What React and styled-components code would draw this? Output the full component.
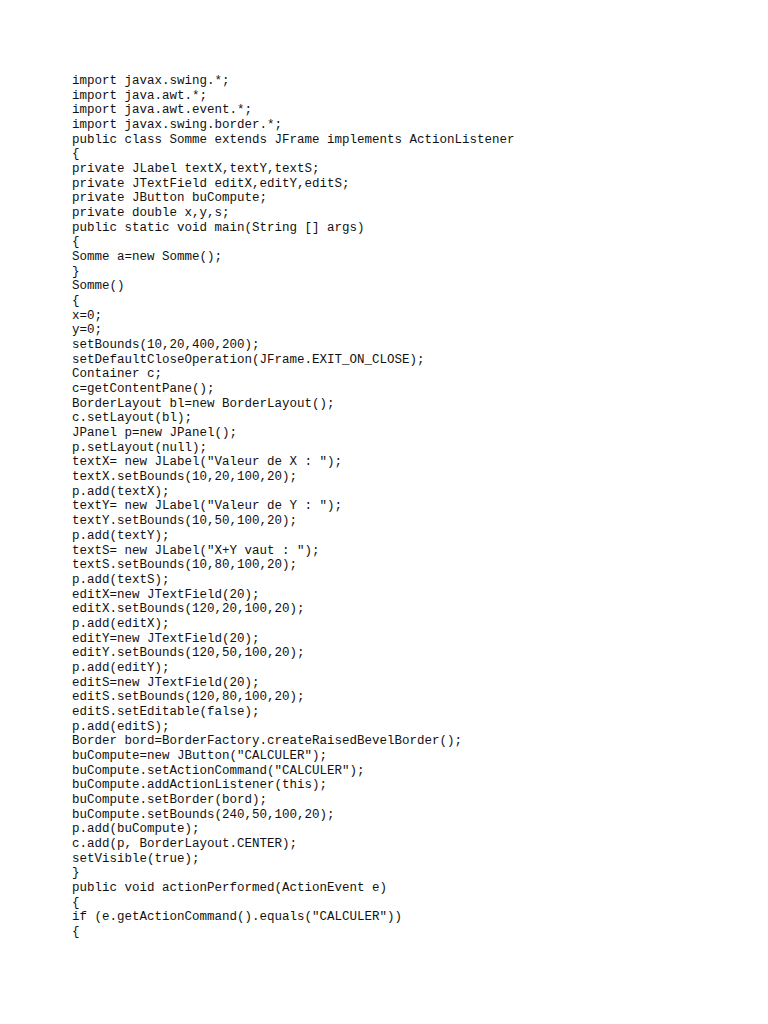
import React from "react";
import styled, { createGlobalStyle } from "styled-components";

const GlobalStyle = createGlobalStyle`
  html, body {
    margin: 0;
    padding: 0;
    background: #ffffff;
  }
`;

const lines = [
  "import javax.swing.*;",
  "import java.awt.*;",
  "import java.awt.event.*;",
  "import javax.swing.border.*;",
  "public class Somme extends JFrame implements ActionListener",
  "{",
  "private JLabel textX,textY,textS;",
  "private JTextField editX,editY,editS;",
  "private JButton buCompute;",
  "private double x,y,s;",
  "public static void main(String [] args)",
  "{",
  "Somme a=new Somme();",
  "}",
  "Somme()",
  "{",
  "x=0;",
  "y=0;",
  "setBounds(10,20,400,200);",
  "setDefaultCloseOperation(JFrame.EXIT_ON_CLOSE);",
  "Container c;",
  "c=getContentPane();",
  "BorderLayout bl=new BorderLayout();",
  "c.setLayout(bl);",
  "JPanel p=new JPanel();",
  "p.setLayout(null);",
  'textX= new JLabel("Valeur de X : ");',
  "textX.setBounds(10,20,100,20);",
  "p.add(textX);",
  'textY= new JLabel("Valeur de Y : ");',
  "textY.setBounds(10,50,100,20);",
  "p.add(textY);",
  'textS= new JLabel("X+Y vaut : ");',
  "textS.setBounds(10,80,100,20);",
  "p.add(textS);",
  "editX=new JTextField(20);",
  "editX.setBounds(120,20,100,20);",
  "p.add(editX);",
  "editY=new JTextField(20);",
  "editY.setBounds(120,50,100,20);",
  "p.add(editY);",
  "editS=new JTextField(20);",
  "editS.setBounds(120,80,100,20);",
  "editS.setEditable(false);",
  "p.add(editS);",
  "Border bord=BorderFactory.createRaisedBevelBorder();",
  'buCompute=new JButton("CALCULER");',
  'buCompute.setActionCommand("CALCULER");',
  "buCompute.addActionListener(this);",
  "buCompute.setBorder(bord);",
  "buCompute.setBounds(240,50,100,20);",
  "p.add(buCompute);",
  "c.add(p, BorderLayout.CENTER);",
  "setVisible(true);",
  "}",
  "public void actionPerformed(ActionEvent e)",
  "{",
  'if (e.getActionCommand().equals("CALCULER"))',
  "{",
];

const Page = styled.div`
  width: 768px;
  height: 1024px;
  background: #ffffff;
  padding: 74px 0 0 72px;
  box-sizing: border-box;
  overflow: hidden;
`;

const Code = styled.pre`
  margin: 0;
  font-family: "Liberation Mono", "DejaVu Sans Mono", monospace;
  font-size: 12.5px;
  line-height: 14.68px;
  color: #111111;
  white-space: pre;
`;

const Line = styled.div`
  height: 14.68px;
`;

export default function App() {
  return (
    <>
      <GlobalStyle />
      <Page>
        <Code>
          {lines.map((l, i) => (
            <Line key={i}>{l}</Line>
          ))}
        </Code>
      </Page>
    </>
  );
}
